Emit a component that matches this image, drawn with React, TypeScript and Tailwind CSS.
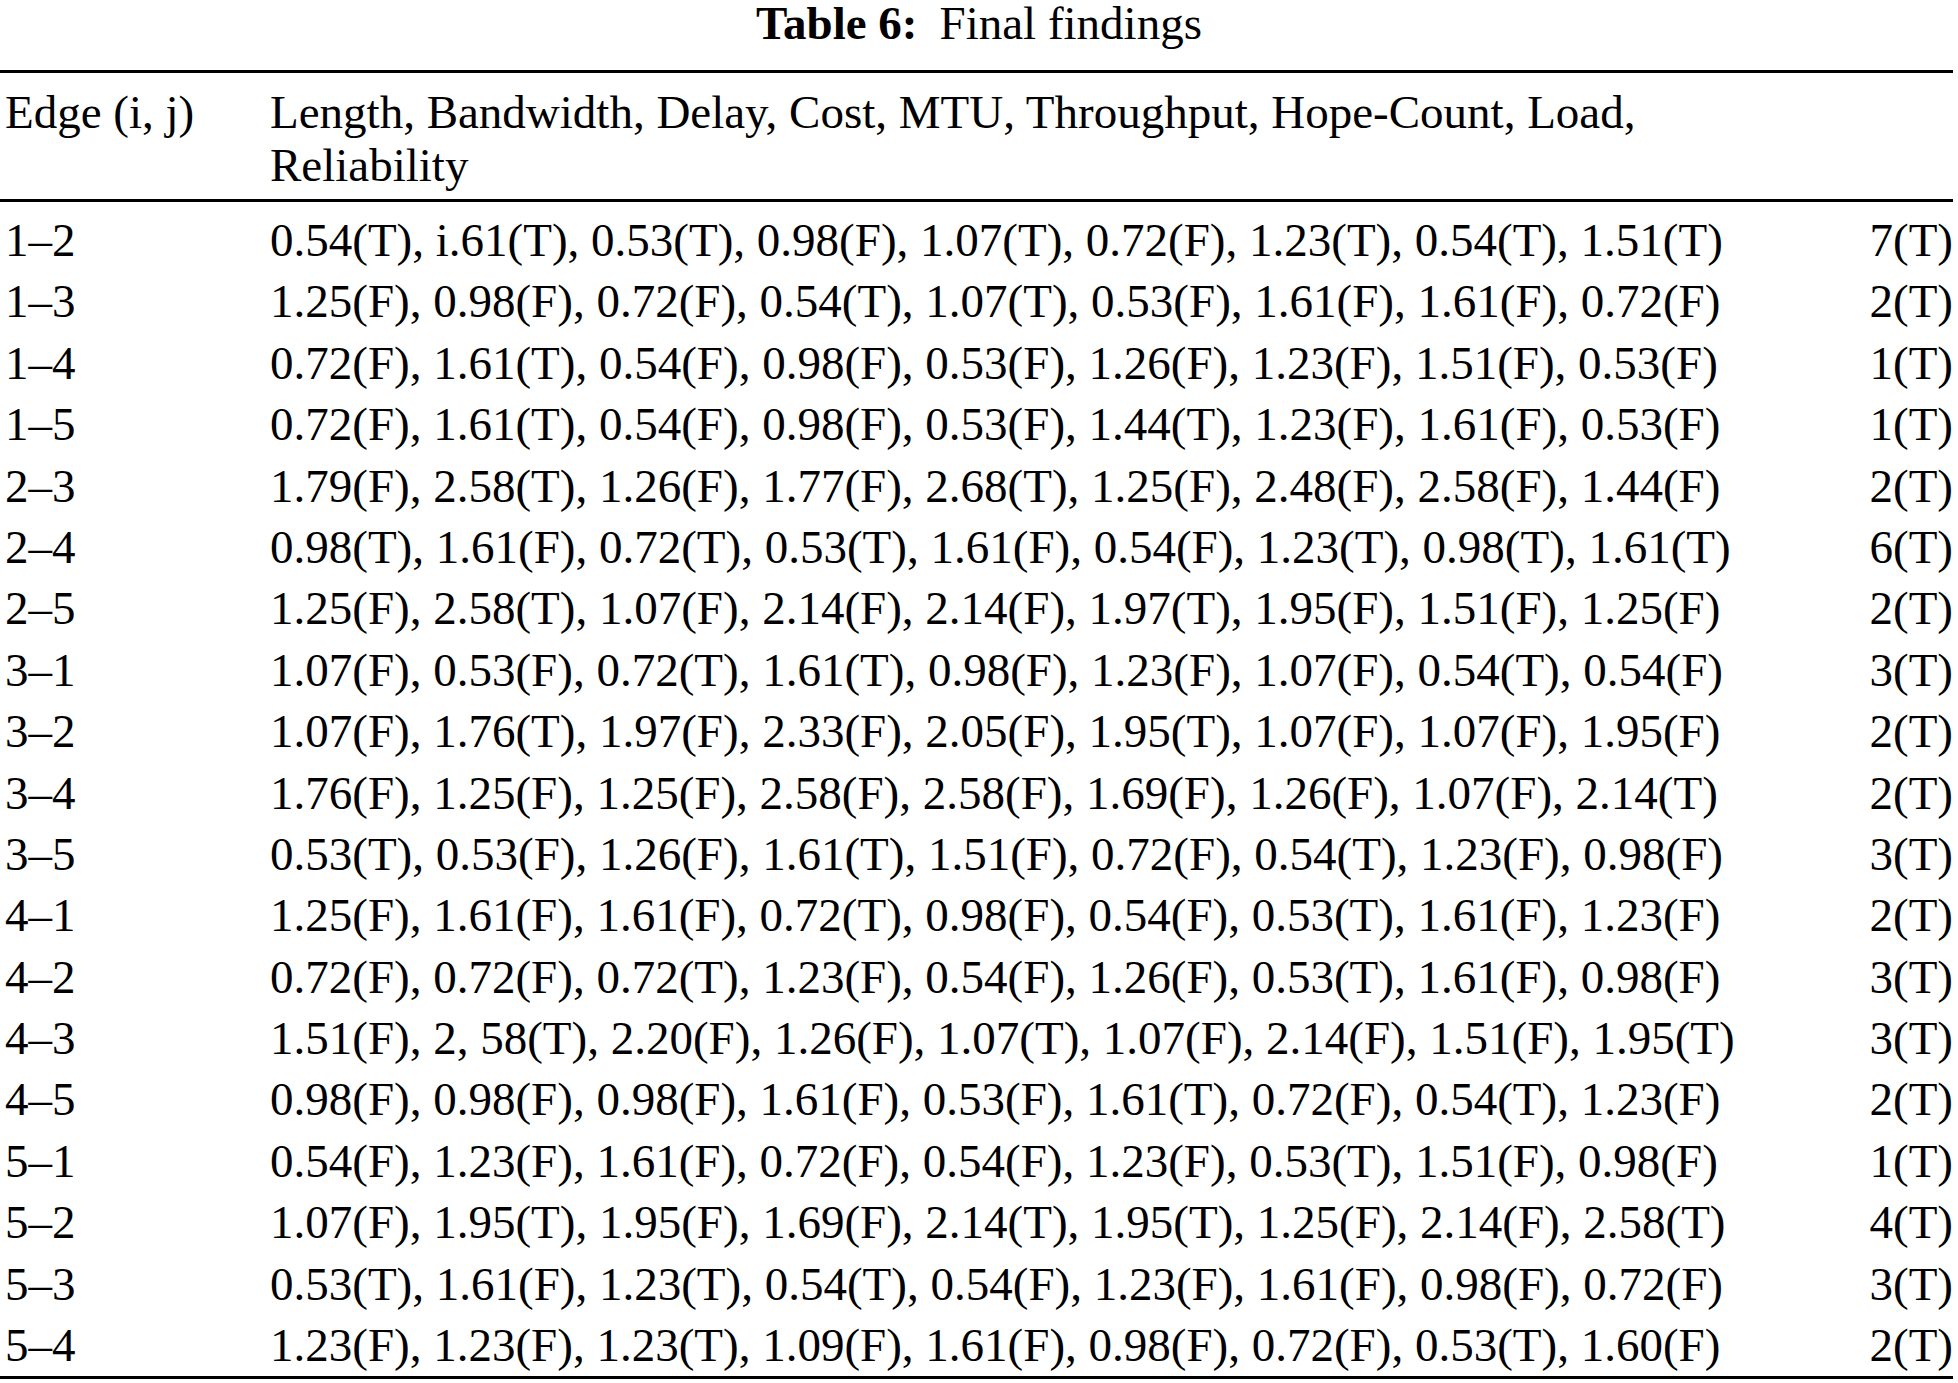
const rows: [string, string, string][] = [
  ["1–2", "0.54(T), i.61(T), 0.53(T), 0.98(F), 1.07(T), 0.72(F), 1.23(T), 0.54(T), 1.51(T)", "7(T)"],
  ["1–3", "1.25(F), 0.98(F), 0.72(F), 0.54(T), 1.07(T), 0.53(F), 1.61(F), 1.61(F), 0.72(F)", "2(T)"],
  ["1–4", "0.72(F), 1.61(T), 0.54(F), 0.98(F), 0.53(F), 1.26(F), 1.23(F), 1.51(F), 0.53(F)", "1(T)"],
  ["1–5", "0.72(F), 1.61(T), 0.54(F), 0.98(F), 0.53(F), 1.44(T), 1.23(F), 1.61(F), 0.53(F)", "1(T)"],
  ["2–3", "1.79(F), 2.58(T), 1.26(F), 1.77(F), 2.68(T), 1.25(F), 2.48(F), 2.58(F), 1.44(F)", "2(T)"],
  ["2–4", "0.98(T), 1.61(F), 0.72(T), 0.53(T), 1.61(F), 0.54(F), 1.23(T), 0.98(T), 1.61(T)", "6(T)"],
  ["2–5", "1.25(F), 2.58(T), 1.07(F), 2.14(F), 2.14(F), 1.97(T), 1.95(F), 1.51(F), 1.25(F)", "2(T)"],
  ["3–1", "1.07(F), 0.53(F), 0.72(T), 1.61(T), 0.98(F), 1.23(F), 1.07(F), 0.54(T), 0.54(F)", "3(T)"],
  ["3–2", "1.07(F), 1.76(T), 1.97(F), 2.33(F), 2.05(F), 1.95(T), 1.07(F), 1.07(F), 1.95(F)", "2(T)"],
  ["3–4", "1.76(F), 1.25(F), 1.25(F), 2.58(F), 2.58(F), 1.69(F), 1.26(F), 1.07(F), 2.14(T)", "2(T)"],
  ["3–5", "0.53(T), 0.53(F), 1.26(F), 1.61(T), 1.51(F), 0.72(F), 0.54(T), 1.23(F), 0.98(F)", "3(T)"],
  ["4–1", "1.25(F), 1.61(F), 1.61(F), 0.72(T), 0.98(F), 0.54(F), 0.53(T), 1.61(F), 1.23(F)", "2(T)"],
  ["4–2", "0.72(F), 0.72(F), 0.72(T), 1.23(F), 0.54(F), 1.26(F), 0.53(T), 1.61(F), 0.98(F)", "3(T)"],
  ["4–3", "1.51(F), 2, 58(T), 2.20(F), 1.26(F), 1.07(T), 1.07(F), 2.14(F), 1.51(F), 1.95(T)", "3(T)"],
  ["4–5", "0.98(F), 0.98(F), 0.98(F), 1.61(F), 0.53(F), 1.61(T), 0.72(F), 0.54(T), 1.23(F)", "2(T)"],
  ["5–1", "0.54(F), 1.23(F), 1.61(F), 0.72(F), 0.54(F), 1.23(F), 0.53(T), 1.51(F), 0.98(F)", "1(T)"],
  ["5–2", "1.07(F), 1.95(T), 1.95(F), 1.69(F), 2.14(T), 1.95(T), 1.25(F), 2.14(F), 2.58(T)", "4(T)"],
  ["5–3", "0.53(T), 1.61(F), 1.23(T), 0.54(T), 0.54(F), 1.23(F), 1.61(F), 0.98(F), 0.72(F)", "3(T)"],
  ["5–4", "1.23(F), 1.23(F), 1.23(T), 1.09(F), 1.61(F), 0.98(F), 0.72(F), 0.53(T), 1.60(F)", "2(T)"],
];

export default function App() {
  return (
    <div className="w-[1958px] h-[1383px] bg-white text-black font-['Liberation_Serif',serif] text-[47px]">
      {/* Caption */}
      <div className="h-[46px] leading-[46px] text-center">
        <span className="font-bold">Table 6:</span>
        <span className="ml-[22px]">Final findings</span>
      </div>

      <div className="mt-[24px] w-[1953px] border-t-[3px] border-black">
        {/* Header */}
        <div className="grid grid-cols-[270px_1fr] pt-[13px] pb-[7px] leading-[53px] border-b-[3px] border-black">
          <div className="pl-[5px]">Edge (i, j)</div>
          <div className="pr-[180px]">Length, Bandwidth, Delay, Cost, MTU, Throughput, Hope-Count, Load, Reliability</div>
        </div>

        {/* Body */}
        <div className="pt-[8px] border-b-[3px] border-black">
          {rows.map(([edge, values, count]) => (
            <div key={edge} className="grid grid-cols-[270px_1fr_auto] h-[61.4px] leading-[61.4px] whitespace-nowrap">
              <div className="pl-[5px]">{edge}</div>
              <div>{values}</div>
              <div className="text-right">{count}</div>
            </div>
          ))}
        </div>
      </div>
    </div>
  );
}
